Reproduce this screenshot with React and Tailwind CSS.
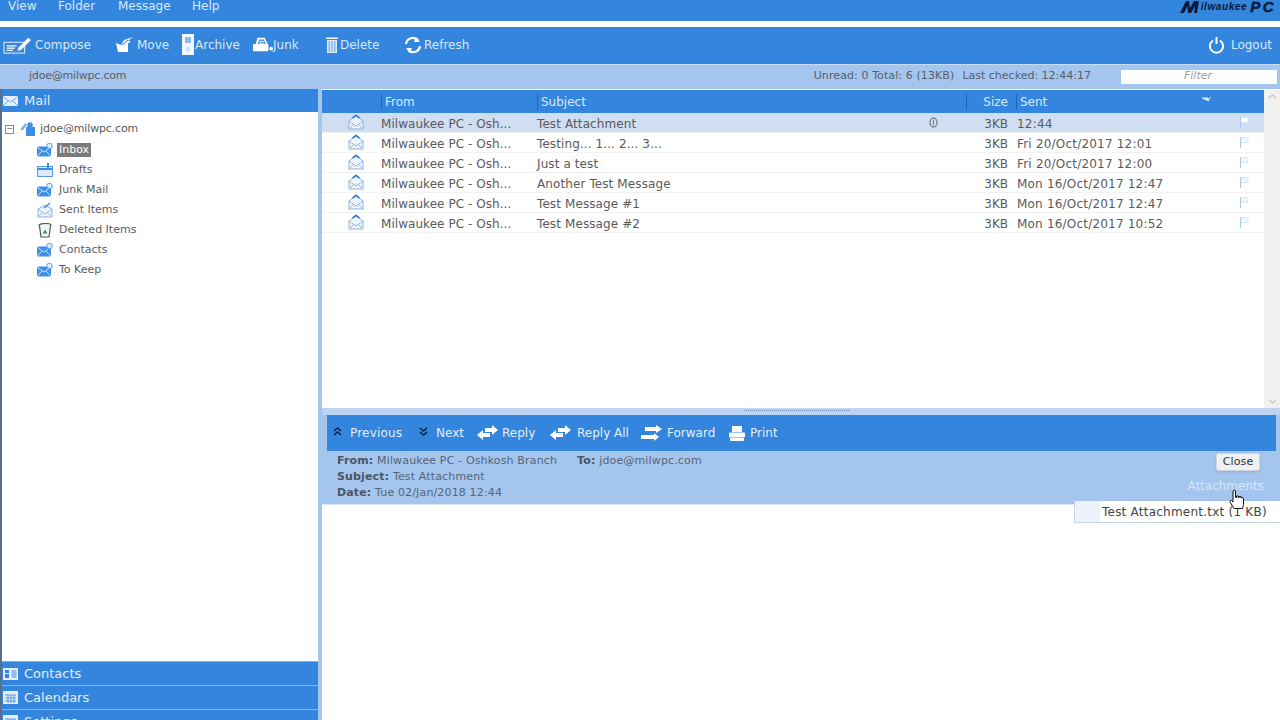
const F = { fontFamily: '"DejaVu Sans", Verdana, sans-serif' };

const Compose = () => (
  <svg width="29" height="18" viewBox="0 0 32 20" fill="none">
    <rect x="1" y="7" width="23" height="12" fill="none" stroke="#dbe9fa" strokeWidth="1.2" />
    <path d="M4 11h11M4 13.5h9M4 16h7" stroke="#fff" strokeWidth="1.4" />
    <path d="M17 13l11-11 3 2.5-11 11-4 1z" fill="#fff" />
  </svg>
);
const Move = () => (
  <svg width="20" height="16" viewBox="0 0 20 16">
    <path d="M1 6l5 2 4-2 3 1v8H3z" fill="#fff" />
    <path d="M6 8l3-5 9-3-5 4 3 0-7 6z" fill="#e9f2fc" />
    <path d="M7 8l6-5" stroke="#3385dd" strokeWidth="1" />
  </svg>
);
const Archive = () => (
  <svg width="12" height="21" viewBox="0 0 12 21">
    <rect x="0" y="0" width="12" height="21" fill="#f4f8fd" />
    <rect x="3" y="3" width="6" height="6" fill="#8fb8e8" />
    <circle cx="6" cy="15" r="2.500" fill="#d2e2f6" />
  </svg>
);
const Junk = () => (
  <svg width="20" height="16" viewBox="0 0 22 16">
    <path d="M5 0h8l3 7h-2l-2-5H7L5 7H3z" fill="#fff" />
    <rect x="0" y="7" width="17" height="8" rx="1" fill="#fff" />
    <circle cx="20" cy="12" r="2" fill="#fff" />
    <path d="M7 4h5M6.5 6h6" stroke="#fff" strokeWidth="1" />
  </svg>
);
const Trash = () => (
  <svg width="12" height="17" viewBox="0 0 12 17">
    <path d="M0 1.5h12V3H0z" fill="#fff" />
    <path d="M1 4h10v13H1z" fill="#dbe9fa" />
    <path d="M3.2 5v11M6 5v11M8.8 5v11" stroke="#5e9de3" strokeWidth="1" />
  </svg>
);
const Refresh = () => (
  <svg width="20" height="18" viewBox="0 0 20 18" fill="none">
    <path d="M3 8a7 7 0 0 1 12-4" stroke="#fff" strokeWidth="2.2" />
    <path d="M17 10a7 7 0 0 1-12 4" stroke="#fff" strokeWidth="2.2" />
    <path d="M13 1l4 5-6 0z" fill="#fff" />
    <path d="M7 17l-4-5 6 0z" fill="#fff" />
  </svg>
);
const Power = () => (
  <svg width="17" height="18" viewBox="0 0 17 18" fill="none">
    <path d="M5 4.5a6.6 6.6 0 1 0 7 0" stroke="#fff" strokeWidth="2" />
    <path d="M8.5 1v7" stroke="#fff" strokeWidth="2" />
  </svg>
);
const MailIco = () => (
  <svg width="15" height="10" viewBox="0 0 15 10">
    <rect width="15" height="10" rx="1" fill="#e9f2fc" />
    <path d="M0.5 1l7 5 7-5M0.5 9.5l5-5M14.5 9.5l-5-5" stroke="#6aa5e6" strokeWidth="1" fill="none" />
  </svg>
);
const FolderMail = () => (
  <svg width="16" height="14" viewBox="0 0 16 14">
    <rect x="0" y="3.500" width="14" height="10" rx="1.500" fill="#3d8ee6" />
    <path d="M0.5 4.500l6.500 4.500 6.500-4.500M0.5 13l4.500-5M13.500 13l-4.500-5" stroke="#d6e7fa" strokeWidth="0.9" fill="none" />
    <circle cx="12.500" cy="3" r="2.800" fill="#dbe9fa" stroke="#3d8ee6" strokeWidth="0.8" />
  </svg>
);
const Drafts = () => (
  <svg width="16" height="14" viewBox="0 0 16 14">
    <rect x="0.5" y="3.5" width="15" height="10" fill="#dbe9fa" stroke="#5b9be2" />
    <path d="M1 6h14" stroke="#3d8ee6" strokeWidth="2" />
    <path d="M11 0v5" stroke="#3d8ee6" strokeWidth="2" />
  </svg>
);
const Sent = () => (
  <svg width="16" height="16" viewBox="0 0 16 16" fill="none">
    <path d="M1 7l7-4 7 4v8H1z" fill="#eef4fc" stroke="#8db5e4" />
    <path d="M1 7l7 5 7-5M1 15l5-5M15 15l-5-5" stroke="#8db5e4" strokeWidth="0.9" />
    <path d="M7 6l6-5" stroke="#3d8ee6" strokeWidth="1.6" />
  </svg>
);
const Bin = () => (
  <svg width="14" height="15" viewBox="0 0 14 15">
    <ellipse cx="7" cy="2.500" rx="6" ry="2" fill="#f2f5f2" stroke="#555" strokeWidth="1.200" />
    <path d="M1.500 3l1.500 11h8l1.500-11" fill="#f2f5f2" stroke="#555" strokeWidth="1.200" />
    <path d="M7 6.500l2.500 4h-5z" fill="#4c9a5a" />
  </svg>
);
const Account = () => (
  <svg width="15" height="14" viewBox="0 0 15 14">
    <path d="M0 8l5-7 2 2-4 5z" fill="#7fb2ea" />
    <rect x="6" y="5" width="9" height="9" fill="#3d8ee6" />
    <circle cx="10" cy="3" r="2.800" fill="#3d8ee6" />
  </svg>
);
const Opened = () => (
  <svg width="16" height="16" viewBox="0 0 16 16" fill="none">
    <path d="M1 7L8 1.500 15 7v8H1z" fill="#eef4fb" stroke="#8fb3dc" />
    <path d="M4.500 4.200L8 1.300l3.500 2.900" stroke="#2f7fd6" strokeWidth="1.600" />
    <path d="M1 7l7 5 7-5M1 15l5-5M15 15l-5-5" stroke="#8fb3dc" strokeWidth="0.9" />
  </svg>
);
const Flag = ({ sel }) => (
  <svg width="9" height="11" viewBox="0 0 9 11" className="-mt-[2px]">
    <path d="M0.500 0v11" stroke="#a9c6e8" />
    <path d="M1 0.500h7v5H1z" fill={sel ? '#fff' : '#eef4fb'} stroke="#cfe0f3" strokeWidth="0.600" />
  </svg>
);
const Chevrons = ({ up }) => (
  <svg width="9" height="9" viewBox="0 0 9 9" fill="none" className="-mt-[3px]" style={up ? {} : { transform: 'scaleY(-1)' }}>
    <path d="M1 4l3.500-3 3.500 3M1 8l3.500-3 3.500 3" stroke="#06224a" strokeWidth="1.500" />
  </svg>
);
const ReplyIco = () => (
  <svg width="21" height="16" viewBox="0 0 21 16">
    <path d="M0 10l6-5v3h7v4H6v3z" fill="#fff" />
    <path d="M21 5l-6-5v3H8v4h7v3z" fill="#fff" />
  </svg>
);
const ForwardIco = () => (
  <svg width="21" height="16" viewBox="0 0 21 16">
    <path d="M21 4l-6-4v2H4v4h11v2z" fill="#fff" />
    <path d="M18 12l-5-4v2H0v4h13v2z" fill="#fff" />
  </svg>
);
const Printer = () => (
  <svg width="16" height="15" viewBox="0 0 16 15">
    <rect x="3" y="0" width="10" height="6" fill="#fff" />
    <rect x="0" y="6.500" width="16" height="5" rx="1" fill="#fff" />
    <rect x="1" y="12" width="14" height="3" rx="1" fill="#fff" />
  </svg>
);
const CalIco = () => (
  <svg width="15" height="13" viewBox="0 0 15 13">
    <rect width="15" height="13" fill="#e4eefb" />
    <path d="M2 4h11M2 7h11M2 10h11M5 4v8M8 4v8M11 4v8" stroke="#5a97df" strokeWidth="1" />
  </svg>
);
const ContactIco = () => (
  <svg width="15" height="12" viewBox="0 0 15 12">
    <rect width="15" height="12" fill="#e4eefb" />
    <rect x="2" y="2" width="4" height="3" fill="#3385dd" />
    <rect x="2" y="6" width="4" height="4" fill="#3385dd" />
    <rect x="8.500" y="2" width="5" height="8" fill="#94bcec" />
  </svg>
);
const Hand = () => (
  <svg width="16" height="22" viewBox="0 0 16 21">
    <path d="M4 1.500a1.300 1.300 0 0 1 2.500 0V8l1 0V6.500h1.800V8h.9V7h1.800v1.500h.8V8c1.500 0 1.700.500 1.700 1.500V15l-1 4H5L1 12.500c-.500-1 .500-2 1.500-1.500L4 12.500z" fill="#fff" stroke="#111" strokeWidth="1" />
  </svg>
);
const LogoMark = () => (
  <svg width="20" height="12" viewBox="0 0 20 12">
    <path d="M0 12L6 0h3l1 7 4-7h5l-2 12h-3l1-7-4 7H8L7.500 5 4 12z" fill="#0a1c3a" />
  </svg>
);

const ToolBtn = ({ icon, label, w, gap = 'gap-1' }) => (
  <div className={`flex items-center ${gap} ${w} shrink-0`}>
    {icon}
    <span>{label}</span>
  </div>
);

const folders = [
  [<FolderMail />, 'Inbox', true],
  [<Drafts />, 'Drafts'],
  [<FolderMail />, 'Junk Mail'],
  [<Sent />, 'Sent Items'],
  [<Bin />, 'Deleted Items'],
  [<FolderMail />, 'Contacts'],
  [<FolderMail />, 'To Keep'],
];

const rows = [
  ['Test Attachment', '12:44', true],
  ['Testing... 1... 2... 3...', 'Fri 20/Oct/2017 12:01'],
  ['Just a test', 'Fri 20/Oct/2017 12:00'],
  ['Another Test Message', 'Mon 16/Oct/2017 12:47'],
  ['Test Message #1', 'Mon 16/Oct/2017 12:47'],
  ['Test Message #2', 'Mon 16/Oct/2017 10:52'],
];

export default function App() {
  return (
    <div style={F} className="relative w-[1280px] h-[720px] overflow-hidden bg-white flex flex-col text-[12px] text-[#5a5a5a]">
      {/* menu */}
      <div className="h-[21px] bg-[#3385dd] flex items-start shrink-0 pl-[8px] text-[#d9e8fa] text-[12px] leading-[12px]">
        <span className="w-[50px]">View</span>
        <span className="w-[60px]">Folder</span>
        <span className="w-[74px]">Message</span>
        <span>Help</span>
        <div className="ml-auto mr-[4px] mt-[1px] flex items-end italic font-bold text-[#0a1c3a] leading-[12px]" style={{ fontFamily: '"Liberation Sans", sans-serif' }}>
          <LogoMark />
          <span className="text-[10px] tracking-[0.6px] ml-[1px]">ilwaukee</span>
          <span className="text-[15px] ml-[3px] tracking-[2.5px] [-webkit-text-stroke:0.5px_#0a1c3a]">PC</span>
        </div>
      </div>
      <div className="h-[6px] bg-white shrink-0" />
      {/* toolbar */}
      <div className="h-[37px] bg-[#3385dd] shrink-0 flex items-center pl-[3px] pr-[8px] pb-[2px] text-[#d9e8fa] text-[12px]">
        <ToolBtn icon={<Compose />} label="Compose" w="w-[112px]" gap="gap-[3px]" />
        <ToolBtn icon={<Move />} label="Move" w="w-[67px]" gap="gap-[2px]" />
        <ToolBtn icon={<Archive />} label="Archive" w="w-[71px]" gap="gap-[1px]" />
        <ToolBtn icon={<Junk />} label="Junk" w="w-[73px]" gap="gap-0" />
        <ToolBtn icon={<Trash />} label="Delete" w="w-[77px]" gap="gap-[2px]" />
        <ToolBtn icon={<Refresh />} label="Refresh" w="w-[80px]" gap="gap-[1px]" />
        <div className="ml-auto flex items-center gap-[6px]">
          <Power />
          <span>Logout</span>
        </div>
      </div>
      {/* status */}
      <div className="h-[25px] bg-[#a4c5ee] shrink-0 flex items-center pl-[29px] pr-[3px] pb-[1px] text-[11px] text-[#555f6b] border-t border-[#c5daf4]">
        <span className="tracking-[-0.2px]">jdoe@milwpc.com</span>
        <span className="ml-auto tracking-[0.1px]">Unread: 0 Total: 6 (13KB)</span>
        <span className="ml-[8px]">Last checked: 12:44:17</span>
        <div className="ml-[30px] w-[156px] h-[14px] bg-white flex items-center justify-center italic text-[11px] text-[#9aa0a8] pr-[2px]">Filter</div>
      </div>
      {/* main */}
      <div className="flex flex-1 min-h-0">
        {/* sidebar */}
        <div className="w-[318px] shrink-0 flex flex-col border-l-2 border-[#5b6f88]">
          <div className="h-[23px] bg-[#3385dd] flex items-center gap-[6px] pl-[1px] text-[13px] text-[#e3eefb] shrink-0">
            <MailIco />
            <span>Mail</span>
          </div>
          <div className="flex-1 pt-[7px] pl-[3px]">
            <div className="h-[20px] mb-[1px] flex items-center">
              <span className="w-[9px] h-[9px] border border-[#8a8a8a] flex items-center justify-center text-[8px] leading-none mr-[6px] text-[#666]">−</span>
              <Account />
              <span className="ml-[5px] text-[11px] tracking-[-0.15px]">jdoe@milwpc.com</span>
            </div>
            {folders.map(([ic, name, sel]) => (
              <div key={name} className="h-[20px] flex items-center">
                <div className="ml-[32px] w-[16px] flex justify-center">{ic}</div>
                <span className={`ml-[4px] px-[2px] text-[11px] leading-[14px] ${sel ? 'bg-[#7a7a7a] text-white' : ''}`}>{name}</span>
              </div>
            ))}
          </div>
          <div className="shrink-0 text-[13px] text-[#e3eefb] -mb-[13px]">
            {[[<ContactIco />, 'Contacts'], [<CalIco />, 'Calendars'], [<CalIco />, 'Settings']].map(([ic, t]) => (
              <div key={t} className="h-[24px] bg-[#3385dd] border-t border-[#7fb2ea] flex items-center gap-[6px] pl-[1px]">
                {ic}
                <span>{t}</span>
              </div>
            ))}
          </div>
        </div>
        {/* splitter */}
        <div className="w-[4px] shrink-0 bg-[#a4c5ee]" />
        {/* right */}
        <div className="flex-1 min-w-0 flex flex-col">
          <div className="h-[319px] shrink-0 flex pt-[1px]">
            <div className="flex-1 min-w-0 flex flex-col">
              <div className="h-[23px] bg-[#3385dd] flex items-center pt-[1px] text-[12px] text-[#d9e8fa] shrink-0 relative">
                <div className="w-[60px] h-[16px] border-r border-[#1c67b8]" />
                <span className="w-[155px] pl-[3px]">From</span>
                <div className="h-[16px] border-l border-[#1c67b8]" />
                <span className="w-[428px] pl-[3px]">Subject</span>
                <div className="h-[16px] border-l border-[#1c67b8]" />
                <span className="w-[41px] text-right">Size</span>
                <div className="h-[16px] ml-[8px] border-l border-[#1c67b8]" />
                <span className="pl-[3px]">Sent</span>
                <svg className="absolute right-[52px] top-[7px]" width="10" height="6" viewBox="0 0 10 6"><path d="M0 1h6l1 3zM6 3l3-3" fill="#d9e8fa" stroke="#d9e8fa" /></svg>
              </div>
              {rows.map(([s, d, sel]) => (
                <div key={s} className={`h-[20px] shrink-0 flex items-center pt-[2px] border-b border-[#f1f1f1] text-[12px] ${sel ? 'bg-[#d0def1]' : ''}`}>
                  <div className="w-[59px] pl-[26px] shrink-0 flex -mt-[4px]"><Opened /></div>
                  <span className="w-[156px] shrink-0 tracking-[0.05px]">Milwaukee PC - Osh...</span>
                  <span className="w-[392px] shrink-0 tracking-[0.1px]">{s}</span>
                  <div className="w-[45px] shrink-0 text-[#8c98a6] -mt-[2px]">
                    {sel ? <svg width="9" height="11" viewBox="0 0 9 11" fill="none"><ellipse cx="4.500" cy="5.500" rx="3.500" ry="4.500" stroke="#7a7f88" strokeWidth="1.300" /><path d="M4.500 3v5" stroke="#7a7f88" /></svg> : null}
                  </div>
                  <span className="w-[34px] shrink-0 text-right">3KB</span>
                  <span className="ml-[9px] w-[223px] shrink-0 tracking-[0.2px]">{d}</span>
                  <Flag sel={sel} />
                </div>
              ))}
            </div>
            <div className="w-[16px] shrink-0 bg-[#f1f1f1] flex flex-col justify-between items-center py-[4px]">
              <svg width="9" height="5" viewBox="0 0 9 5" fill="none"><path d="M1 4l3.500-3L8 4" stroke="#c4c4c4" strokeWidth="1.300" /></svg>
              <svg width="9" height="5" viewBox="0 0 9 5" fill="none"><path d="M1 1l3.500 3L8 1" stroke="#c4c4c4" strokeWidth="1.300" /></svg>
            </div>
          </div>
          <div className="h-[7px] bg-[#bcd4f1] shrink-0 flex justify-center pt-[2px]">
            <div className="ml-[-10px] w-[105px] h-[1px] border-t border-dotted border-[#6a8fbd]" />
          </div>
          {/* preview toolbar */}
          <div className="shrink-0 bg-[#a4c5ee] pl-[5px] pr-[4px]">
            <div className="h-[36px] bg-[#3385dd] flex items-center pl-[6px] text-[12px] text-[#e3eefb]">
              <ToolBtn icon={<Chevrons up />} label={<span className="tracking-[0.2px]">Previous</span>} w="w-[86px]" gap="gap-[8px]" />
              <ToolBtn icon={<Chevrons />} label="Next" w="w-[58px]" gap="gap-[8px]" />
              <ToolBtn icon={<ReplyIco />} label="Reply" w="w-[73px]" gap="gap-[4px]" />
              <ToolBtn icon={<ReplyIco />} label="Reply All" w="w-[91px]" gap="gap-[6px]" />
              <ToolBtn icon={<ForwardIco />} label="Forward" w="w-[88px]" gap="gap-[5px]" />
              <ToolBtn icon={<Printer />} label="Print" gap="gap-[5px]" />
            </div>
          </div>
          <div className="h-[54px] shrink-0 bg-[#a4c5ee] pl-[15px] pr-[16px] pt-[2px] flex justify-between text-[11px] leading-[16px] tracking-[0.15px] text-[#566577] border-b border-[#dbe7f7]">
            <div>
              <div className="flex">
                <span><b className="text-[#4d5560]">From:</b> Milwaukee PC - Oshkosh Branch</span>
                <span className="ml-[20px]"><b className="text-[#4d5560]">To:</b> jdoe@milwpc.com</span>
              </div>
              <div><b className="text-[#4d5560]">Subject:</b> Test Attachment</div>
              <div><b className="text-[#4d5560]">Date:</b> Tue 02/Jan/2018 12:44</div>
            </div>
            <div className="flex flex-col items-end">
              <div className="mr-[4px] w-[44px] h-[18px] bg-[#eef0f2] border border-[#d0d6dd] rounded-[2px] flex items-center justify-center text-[11px] text-[#333] shadow-sm">Close</div>
              <span className="mt-[7px] text-[12px] tracking-normal text-[#d7e6f9]">Attachments</span>
            </div>
          </div>
          <div className="flex-1 bg-white" />
        </div>
      </div>
      {/* attachment popup */}
      <div className="absolute left-[1074px] top-[501px] w-[206px] h-[22px] bg-white border-b border-l border-[#c5d5ea] flex items-center pl-[27px] text-[12px] text-[#444] whitespace-nowrap">
        <div className="absolute left-0 top-0 w-[25px] h-full bg-[#eef1fb]" />
        <span className="relative tracking-[0.23px]">Test Attachment.txt (1 KB)</span>
      </div>
      <div className="absolute left-[1229px] top-[489px]"><Hand /></div>
    </div>
  );
}
